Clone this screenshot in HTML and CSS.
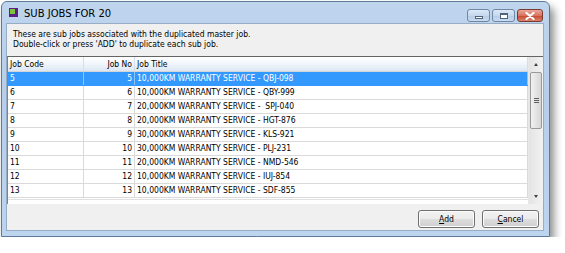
FILE: index.html
```html
<!DOCTYPE html>
<html lang="en">
<head>
    <meta charset="UTF-8">
    <title>SUB JOBS FOR 20</title>
    <link rel="stylesheet" href="styles.css">
</head>
<body>

<div class="window">
    <div class="titlebar">
        <svg class="app-icon" width="9" height="9" viewBox="0 0 9 9">
            <rect x="0" y="0" width="9" height="9" fill="#5b1f86"/>
            <rect x="1" y="1" width="5" height="5" fill="#7dc242"/>
        </svg>
        <span class="title">SUB JOBS FOR 20</span>
        <div class="caption-buttons">
            <span class="cbtn min"><i></i></span>
            <span class="cbtn max"><i></i></span>
            <span class="cbtn close">
                <svg width="10" height="8" viewBox="0 0 10 8">
                    <path d="M1.5 1 L8.5 7 M8.5 1 L1.5 7" stroke="#fff" stroke-width="2.2" stroke-linecap="round"/>
                </svg>
            </span>
        </div>
    </div>

    <div class="client">
        <p class="info">These are sub jobs associated with the duplicated master job.<br>Double-click or press 'ADD' to duplicate each sub job.</p>

        <div class="grid">
            <div class="grid-table">
                <div class="row head">
                    <span class="c-code">Job Code</span>
                    <span class="c-no">Job No</span>
                    <span class="c-title">Job Title</span>
                </div>
                <div class="row selected">
                    <span class="c-code">5</span><span class="c-no">5</span><span class="c-title">10,000KM WARRANTY SERVICE - QBJ-098</span>
                </div>
                <div class="row">
                    <span class="c-code">6</span><span class="c-no">6</span><span class="c-title">10,000KM WARRANTY SERVICE - QBY-999</span>
                </div>
                <div class="row">
                    <span class="c-code">7</span><span class="c-no">7</span><span class="c-title">20,000KM WARRANTY SERVICE - &nbsp;SPJ-040</span>
                </div>
                <div class="row">
                    <span class="c-code">8</span><span class="c-no">8</span><span class="c-title">20,000KM WARRANTY SERVICE - HGT-876</span>
                </div>
                <div class="row">
                    <span class="c-code">9</span><span class="c-no">9</span><span class="c-title">30,000KM WARRANTY SERVICE - KLS-921</span>
                </div>
                <div class="row">
                    <span class="c-code">10</span><span class="c-no">10</span><span class="c-title">30,000KM WARRANTY SERVICE - PLJ-231</span>
                </div>
                <div class="row">
                    <span class="c-code">11</span><span class="c-no">11</span><span class="c-title">20,000KM WARRANTY SERVICE - NMD-546</span>
                </div>
                <div class="row">
                    <span class="c-code">12</span><span class="c-no">12</span><span class="c-title">10,000KM WARRANTY SERVICE - IUJ-854</span>
                </div>
                <div class="row">
                    <span class="c-code">13</span><span class="c-no">13</span><span class="c-title">10,000KM WARRANTY SERVICE - SDF-855</span>
                </div>
            </div>
            <div class="scrollbar">
                <span class="arrow up"></span>
                <div class="track">
                    <span class="thumb"><i></i></span>
                </div>
                <span class="arrow down"></span>
            </div>
        </div>

        <div class="actions">
            <button class="button"><u>A</u>dd</button>
            <button class="button"><u>C</u>ancel</button>
        </div>
    </div>
</div>

</body>
</html>
```

FILE: styles.css
```css
body {
    margin: 0;
    padding: 1px 0 0 1px;
    background-color: #fff;
    font-family: "DejaVu Sans Condensed", "DejaVu Sans", Tahoma, sans-serif;
    font-stretch: condensed;
    font-size: 8.5px;
    color: #000;
}
.window {
    width: 547px;
    height: 234px;
    border: 1px solid #5d7a99;
    border-radius: 6px 6px 0 0;
    background: linear-gradient(#bfd5ee, #b6cee9 40%, #bcd4ee);
    box-shadow: 4px 6px 9px rgba(0, 0, 0, 0.45);
    display: flex;
    flex-direction: column;
}
.titlebar {
    height: 21px;
    display: flex;
    align-items: center;
    padding: 0 6px 0 7px;
}
.app-icon {
    display: block;
    margin-right: 6px;
}
.title {
    font-family: "DejaVu Sans", sans-serif;
    font-stretch: normal;
    font-size: 10px;
    color: #000;
    flex: 1;
    margin-top: 2px;
}
.caption-buttons {
    display: flex;
    gap: 2px;
    align-self: flex-start;
    margin-top: 7px;
}
.cbtn {
    width: 23px;
    height: 13px;
    border: 1px solid #6f87a4;
    border-radius: 3px;
    box-sizing: border-box;
    background: linear-gradient(#dce8f5, #c5d8ee 50%, #b5cbe6 51%, #c9dbf0);
    display: flex;
    align-items: center;
    justify-content: center;
}
.cbtn.min i {
    width: 8px;
    height: 3px;
    margin-top: 4px;
    background: #fff;
    border: 1px solid #4e627a;
    box-sizing: border-box;
}
.cbtn.max i {
    width: 8px;
    height: 6px;
    background: #fff;
    border: 1px solid #4e627a;
    border-top-width: 2px;
    box-sizing: border-box;
}
.cbtn.close {
    width: 26px;
    border-color: #7a3a30;
    background: linear-gradient(#e9a99c, #d8735f 50%, #c6452c 51%, #d8866f);
}
.client {
    flex: 1;
    margin: 0 5px 5px 4px;
    background-color: #f0f0f0;
    border: 1px solid #97adc6;
    display: flex;
    flex-direction: column;
}
.info {
    margin: 5px 0 0 6px;
    line-height: 10px;
}
.grid {
    margin: 7px 0 0 0;
    height: 147px;
    border-top: 1px solid #646464;
    border-left: 1px solid #828282;
    background-color: #fff;
    display: flex;
}
.grid-table {
    flex: 1;
    display: flex;
    flex-direction: column;
    border-bottom: 1px solid #e0e0e0;
    margin-bottom: 4px;
}
.row {
    display: flex;
    height: 14px;
    box-sizing: border-box;
    border-bottom: 1px solid #dadada;
    line-height: 13px;
}
.row span {
    box-sizing: border-box;
    padding: 0 2px;
    white-space: pre;
    border-right: 1px solid #dadada;
}
.c-code {
    width: 76px;
}
.c-no {
    width: 51px;
    text-align: right;
}
.c-title {
    flex: 1;
}
.row.head {
    height: 15px;
    line-height: 14px;
    background: linear-gradient(#ffffff, #f4f8fc 40%, #dce7f4);
    border-bottom: 1px solid #d5d5d5;
}
.row.head span {
    border-right: 1px solid #d5dfeb;
}
.row.selected {
    background-color: #3399ff;
    color: #fff;
    border-bottom-color: #3399ff;
}
.row.selected span {
    border-right-color: #8cc6ff;
}
.scrollbar {
    width: 14px;
    display: flex;
    flex-direction: column;
    background: linear-gradient(90deg, #e4e4e4, #f2f2f2);
    border-left: 1px solid #e8e8e8;
}
.arrow {
    height: 15px;
    position: relative;
}
.arrow::after {
    content: "";
    position: absolute;
    left: 5px;
    width: 0;
    height: 0;
    border-left: 2px solid transparent;
    border-right: 2px solid transparent;
}
.arrow.up::after {
    top: 6px;
    border-bottom: 3px solid #404040;
}
.arrow.down::after {
    top: 6px;
    border-top: 3px solid #404040;
}
.track {
    flex: 1;
}
.thumb {
    display: flex;
    align-items: center;
    justify-content: center;
    height: 55px;
    margin: 0 1px;
    border: 1px solid #9a9a9a;
    border-radius: 2px;
    background: linear-gradient(90deg, #f1f1f1, #e4e4e4 50%, #d6d6d6);
}
.thumb i {
    width: 5px;
    height: 5px;
    background: repeating-linear-gradient(#5f5f5f 0 1px, transparent 1px 2px);
}
.actions {
    flex: 1;
    display: flex;
    justify-content: flex-end;
    align-items: flex-start;
    gap: 7px;
    padding: 6px 4px 0 0;
}
.button {
    width: 57px;
    height: 18px;
    padding: 0;
    font-family: inherit;
    font-stretch: inherit;
    font-size: 8.5px;
    color: #000;
    border: 1px solid #707070;
    border-radius: 3px;
    background: linear-gradient(#f2f2f2, #ebebeb 50%, #dddddd 51%, #cfcfcf);
    box-shadow: inset 0 0 0 1px #fcfcfc;
}
```
